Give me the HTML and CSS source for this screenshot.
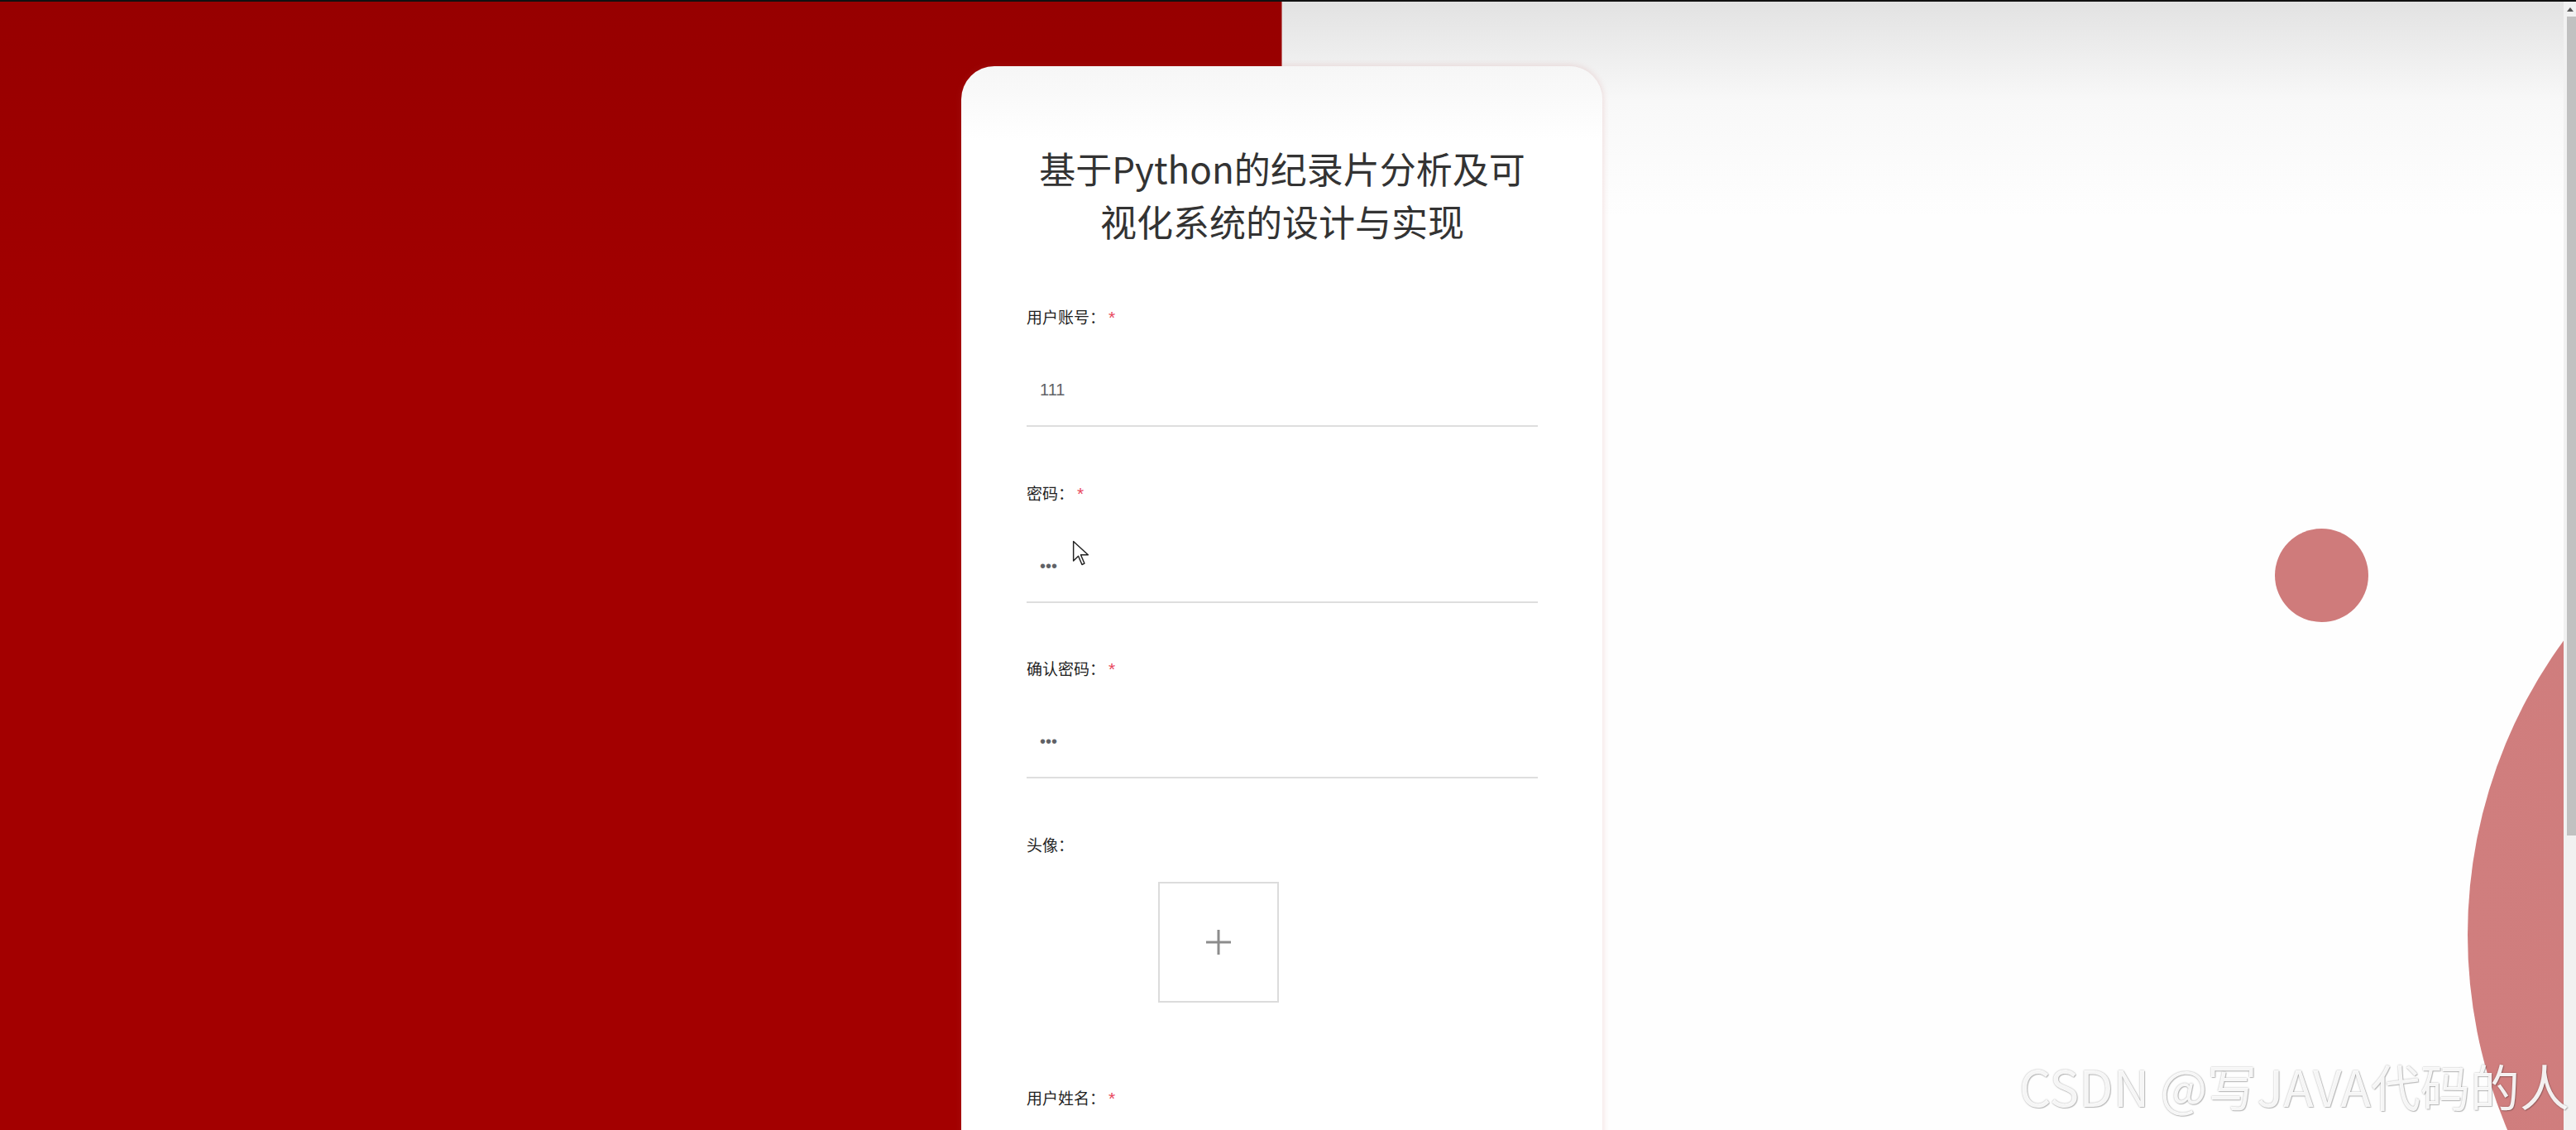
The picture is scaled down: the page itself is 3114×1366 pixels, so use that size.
FILE: index.html
```html
<!DOCTYPE html>
<html lang="zh-CN">
<head>
  <meta charset="UTF-8" />
  <meta name="viewport" content="width=device-width, initial-scale=1.0"/>
  <title>用户注册</title>
  <link rel="stylesheet" href="styles.css">
</head>
<body>

<div class="page">
  <div class="screen">
    <div class="dot dot-small"></div>
    <div class="dot dot-big"></div>

    <form class="register-card">
      <h1 class="title">基于Python的纪录片分析及可视化系统的设计与实现</h1>

      <div class="field">
        <label class="field-label">用户账号：<span class="req">*</span></label>
        <input class="field-input" type="text" value="111" />
      </div>

      <div class="field">
        <label class="field-label">密码：<span class="req">*</span></label>
        <input class="field-input" type="password" value="111" />
      </div>

      <div class="field">
        <label class="field-label">确认密码：<span class="req">*</span></label>
        <input class="field-input" type="password" value="111" />
      </div>

      <div class="field field-avatar">
        <label class="field-label">头像：</label>
        <div class="avatar-row">
          <div class="avatar-preview"></div>
          <div class="upload-box">
            <svg width="32" height="32" viewBox="0 0 32 32">
              <path d="M16 1v30M1 16h30" stroke="#8c8c8c" stroke-width="3" fill="none"/>
            </svg>
          </div>
        </div>
      </div>

      <div class="field">
        <label class="field-label">用户姓名：<span class="req">*</span></label>
        <input class="field-input" type="text" value="" />
      </div>

      <div class="field">
        <label class="field-label">性别：</label>
        <input class="field-input" type="text" value="" />
      </div>
    </form>

    <!-- mouse pointer caught in the capture -->
    <svg class="cursor" width="21" height="31" viewBox="0 0 14 21">
      <path d="M1 1v16l4-4 3 7 2-1-3-7h6z" fill="#fff" stroke="#222" stroke-width="1" stroke-linejoin="round"/>
    </svg>
  </div>

  <div class="scrollbar">
    <span class="scroll-arrow"></span>
    <div class="scroll-thumb"></div>
  </div>

  <div class="watermark">CSDN @写JAVA代码的人</div>
</div>

</body>
</html>
```

FILE: styles.css
```css
html, body {
  margin: 0;
  height: 100%;
}
body {
  font-family: "Noto Sans CJK SC", "Liberation Sans", sans-serif;
  overflow: hidden;
}
.page {
  position: relative;
  display: flex;
  height: 100vh;
  box-sizing: border-box;
  border-top: 2px solid #111;
}
.screen {
  position: relative;
  flex: 1;
  overflow: hidden;
  display: flex;
  justify-content: center;
  align-items: flex-start;
  padding-top: 78px;
  background:
    linear-gradient(#970000, #a30000 420px) left top / 50% 100% no-repeat,
    linear-gradient(#e2e2e2, #f8f8f8 120px, #fefefe 260px);
}
.dot {
  position: absolute;
  border-radius: 50%;
  background: #cf7b7b;
}
.dot-small {
  left: 2750px;
  top: 637px;
  width: 113px;
  height: 113px;
}
.dot-big {
  left: 2983px;
  top: 525px;
  width: 1206px;
  height: 1206px;
  background: linear-gradient(to right, #d07e7e, #cc7474);
}

.register-card {
  position: relative;
  width: 775px;
  min-height: 1500px;
  box-sizing: border-box;
  padding: 91px 78px 60px 79px;
  border-radius: 40px;
  background: linear-gradient(#f6f6f6, #fff 90px);
  box-shadow: 0 0 9px rgba(190, 70, 70, 0.2);
}
.title {
  margin: 0 0 74px;
  padding: 0 10px;
  font-size: 44px;
  line-height: 64px;
  font-weight: 400;
  color: #333;
  text-align: center;
}
.field {
  margin-bottom: 69.5px;
}
.field-label {
  display: block;
  height: 20px;
  font-size: 19px;
  line-height: 20px;
  color: #1f1f1f;
}
.req {
  margin-left: 4px;
  color: #e8475c;
  font-family: "Liberation Sans", sans-serif;
  font-size: 21px;
  line-height: 0;
}
.field-input {
  display: block;
  width: 100%;
  height: 87px;
  margin-top: 36px;
  box-sizing: border-box;
  padding: 0 16px;
  border: none;
  border-bottom: 2px solid #dedede;
  background: transparent;
  outline: none;
  font-family: "Liberation Sans", sans-serif;
  font-size: 20px;
  color: #606266;
}
.field-avatar {
  margin-bottom: 105px;
}
.avatar-row {
  display: flex;
  gap: 13px;
  margin-top: 35px;
}
.avatar-preview {
  width: 146px;
  height: 146px;
}
.upload-box {
  width: 146px;
  height: 146px;
  box-sizing: border-box;
  border: 2px solid #dcdcdc;
  display: flex;
  align-items: center;
  justify-content: center;
}

.cursor {
  position: absolute;
  left: 1296px;
  top: 651px;
}

.scrollbar {
  width: 15px;
  background: #f1f1f1;
  display: flex;
  flex-direction: column;
  align-items: flex-end;
}
.scroll-arrow {
  width: 0;
  height: 0;
  margin: 7px 3px 6px 0;
  border-left: 4px solid transparent;
  border-right: 4px solid transparent;
  border-bottom: 5px solid #555;
}
.scroll-thumb {
  width: 11px;
  height: 990px;
  background: #c1c1c1;
}

.watermark {
  position: absolute;
  right: 8px;
  bottom: 24px;
  font-size: 60px;
  line-height: 1;
  color: rgba(255, 255, 255, 0.92);
  text-shadow: 0 0 2px rgba(0, 0, 0, 0.35), 1px 1px 1px rgba(0, 0, 0, 0.2);
  white-space: nowrap;
  pointer-events: none;
}
```
